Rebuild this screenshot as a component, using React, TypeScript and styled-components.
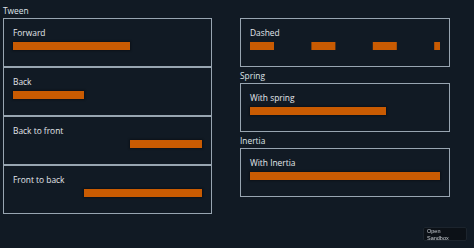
import React from "react";
import styled, { createGlobalStyle } from "styled-components";

const Global = createGlobalStyle`
  html, body {
    margin: 0;
    padding: 0;
    background: #111a24;
  }
  body {
    font-family: "Open Sans", "Liberation Sans", sans-serif;
    color: #dfe4ea;
  }
`;

const Page = styled.div`
  display: grid;
  grid-template-columns: 209px 210px;
  column-gap: 28px;
  align-items: start;
  padding: 2px 0 0 3px;
  height: 246px;
  box-sizing: content-box;
`;

const Column = styled.div<{ $offset?: boolean }>`
  display: flex;
  flex-direction: column;
  padding-top: ${({ $offset }) => ($offset ? "16px" : "0")};
`;

const GroupLabel = styled.div`
  font-size: 8.4px;
  line-height: 12px;
  padding: 3px 0 1px;
  color: #dfe4ea;
`;

const Stack = styled.div`
  display: flex;
  flex-direction: column;
`;

const Item = styled.div`
  border: 1px solid #98a5b1;
  padding: 8px 9px 16px;
  display: flex;
  flex-direction: column;
`;

const Title = styled.div`
  font-size: 8.4px;
  line-height: 12px;
  color: #e3e7ec;
`;

const Track = styled.div`
  position: relative;
  height: 8px;
  margin-top: 3px;
`;

const Bar = styled.div`
  position: absolute;
  top: 0;
  bottom: 0;
  background: #c95b02;
  box-shadow: 0 0 2px 1px rgba(0, 0, 0, 0.35);
`;

const Dashes = styled.svg`
  display: block;
  width: 100%;
  height: 8px;
  overflow: hidden;
`;

const SandboxButton = styled.div`
  position: fixed;
  left: 423px;
  top: 227px;
  width: 44px;
  height: 14px;
  box-sizing: border-box;
  padding: 0 3px;
  background: #0c1117;
  border: 1px solid #1c242d;
  border-radius: 2px;
  font-family: "Liberation Sans", Arial, sans-serif;
  font-size: 5.5px;
  line-height: 6.5px;
  color: #c7ccd2;
`;

const ButtonLine = styled.span`
  display: block;
`;

type BarSpec = { title: string; from: number; to: number };

const tween: BarSpec[] = [
  { title: "Forward", from: 0, to: 0.62 },
  { title: "Back", from: 0, to: 0.375 },
  { title: "Back to front", from: 0.62, to: 1 },
  { title: "Front to back", from: 0.375, to: 1 },
];

const BarItem: React.FC<BarSpec> = ({ title, from, to }) => (
  <Item>
    <Title>{title}</Title>
    <Track>
      <Bar style={{ left: `${from * 100}%`, width: `${(to - from) * 100}%` }} />
    </Track>
  </Item>
);

export default function App() {
  return (
    <>
      <Global />
      <Page>
        <Column>
          <GroupLabel>Tween</GroupLabel>
          <Stack>
            {tween.map((t) => (
              <BarItem key={t.title} {...t} />
            ))}
          </Stack>
        </Column>
        <Column $offset>
          <Item>
            <Title>Dashed</Title>
            <Track>
              <Dashes viewBox="0 0 190 8" preserveAspectRatio="none">
                <line
                  x1="0"
                  y1="4"
                  x2="190"
                  y2="4"
                  stroke="#c95b02"
                  strokeWidth="8"
                  strokeDasharray="24 37.4"
                />
              </Dashes>
            </Track>
          </Item>
          <GroupLabel>Spring</GroupLabel>
          <BarItem title="With spring" from={0} to={0.715} />
          <GroupLabel>Inertia</GroupLabel>
          <BarItem title="With Inertia" from={0} to={1} />
        </Column>
      </Page>
      <SandboxButton>
        <ButtonLine>Open</ButtonLine>
        <ButtonLine>Sandbox</ButtonLine>
      </SandboxButton>
    </>
  );
}
